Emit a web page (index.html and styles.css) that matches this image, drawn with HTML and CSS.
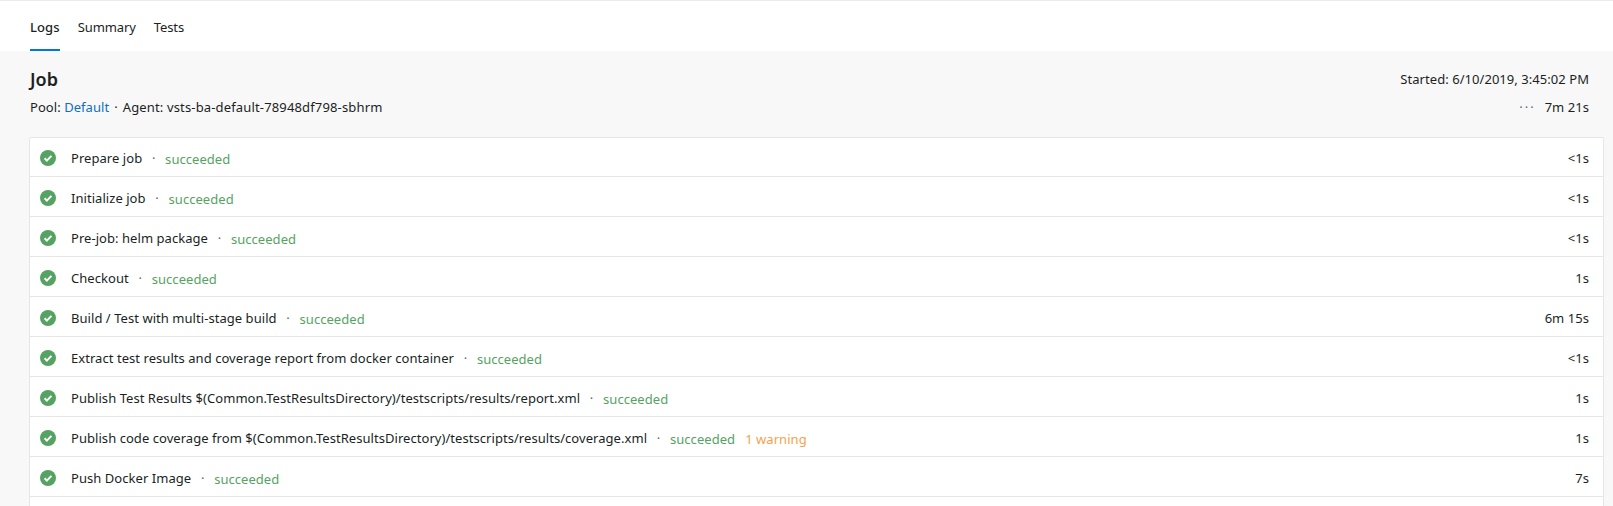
FILE: index.html
```html
<!DOCTYPE html>
<html lang="en">
<head>
<meta charset="utf-8">
<title>Job logs</title>
<link rel="stylesheet" href="styles.css">
</head>
<body>
<nav class="tabs">
  <a class="tab active">Logs</a>
  <a class="tab">Summary</a>
  <a class="tab">Tests</a>
</nav>
<main class="content">
  <header class="job-head">
    <div class="job-top">
      <h1 class="job-title">Job</h1>
      <span class="meta">Started: 6/10/2019, 3:45:02 PM</span>
    </div>
    <div class="job-sub">
      <span class="meta">Pool: <a class="link">Default</a><span class="dot">·</span><span class="agent">Agent: vsts-ba-default-78948df798-sbhrm</span></span>
      <span class="meta duration"><span class="dots">···</span>7m 21s</span>
    </div>
  </header>
  <section class="card">
    <div class="row"><svg class="check" viewBox="0 0 16 16"><circle cx="8" cy="8" r="8"/><path d="M4.6 8.3l2.3 2.3 4.5-4.7"/></svg><span class="name">Prepare job</span><span class="sep">·</span><span class="ok">succeeded</span><span class="time">&lt;1s</span></div>
    <div class="row"><svg class="check" viewBox="0 0 16 16"><circle cx="8" cy="8" r="8"/><path d="M4.6 8.3l2.3 2.3 4.5-4.7"/></svg><span class="name">Initialize job</span><span class="sep">·</span><span class="ok">succeeded</span><span class="time">&lt;1s</span></div>
    <div class="row"><svg class="check" viewBox="0 0 16 16"><circle cx="8" cy="8" r="8"/><path d="M4.6 8.3l2.3 2.3 4.5-4.7"/></svg><span class="name">Pre-job: helm package</span><span class="sep">·</span><span class="ok">succeeded</span><span class="time">&lt;1s</span></div>
    <div class="row"><svg class="check" viewBox="0 0 16 16"><circle cx="8" cy="8" r="8"/><path d="M4.6 8.3l2.3 2.3 4.5-4.7"/></svg><span class="name">Checkout</span><span class="sep">·</span><span class="ok">succeeded</span><span class="time">1s</span></div>
    <div class="row"><svg class="check" viewBox="0 0 16 16"><circle cx="8" cy="8" r="8"/><path d="M4.6 8.3l2.3 2.3 4.5-4.7"/></svg><span class="name">Build / Test with multi-stage build</span><span class="sep">·</span><span class="ok">succeeded</span><span class="time">6m 15s</span></div>
    <div class="row"><svg class="check" viewBox="0 0 16 16"><circle cx="8" cy="8" r="8"/><path d="M4.6 8.3l2.3 2.3 4.5-4.7"/></svg><span class="name">Extract test results and coverage report from docker container</span><span class="sep">·</span><span class="ok">succeeded</span><span class="time">&lt;1s</span></div>
    <div class="row"><svg class="check" viewBox="0 0 16 16"><circle cx="8" cy="8" r="8"/><path d="M4.6 8.3l2.3 2.3 4.5-4.7"/></svg><span class="name">Publish Test Results $(Common.TestResultsDirectory)/testscripts/results/report.xml</span><span class="sep">·</span><span class="ok">succeeded</span><span class="time">1s</span></div>
    <div class="row"><svg class="check" viewBox="0 0 16 16"><circle cx="8" cy="8" r="8"/><path d="M4.6 8.3l2.3 2.3 4.5-4.7"/></svg><span class="name">Publish code coverage from $(Common.TestResultsDirectory)/testscripts/results/coverage.xml</span><span class="sep">·</span><span class="ok">succeeded</span><span class="warn">1 warning</span><span class="time">1s</span></div>
    <div class="row"><svg class="check" viewBox="0 0 16 16"><circle cx="8" cy="8" r="8"/><path d="M4.6 8.3l2.3 2.3 4.5-4.7"/></svg><span class="name">Push Docker Image</span><span class="sep">·</span><span class="ok">succeeded</span><span class="time">7s</span></div>
    <div class="row empty"></div>
  </section>
</main>
</body>
</html>
```
FILE: styles.css
```css
* { box-sizing: border-box; }
html, body { margin: 0; height: 100%; overflow: hidden; }
body {
  background: #f8f8f8;
  color: #201f1e;
  font-family: "Noto Sans", "Open Sans", sans-serif;
  font-size: 13px;
  letter-spacing: 0.05px;
}
.tabs {
  display: flex;
  gap: 18px;
  height: 51px;
  padding: 0 30px;
  background: #fff;
  border-top: 1px solid #eaeaea;
  letter-spacing: -0.1px;
}
.tab {
  height: 50px;
  padding-top: 17px;
  line-height: 18px;
  border-bottom: 2px solid transparent;
}
.tab.active { border-bottom-color: #0078d4; font-weight: 500; letter-spacing: 0.1px; }
.content { padding: 0 9px 0 29px; }
.job-head { height: 86px; padding: 15px 15px 0 1px; }
.job-top, .job-sub { display: flex; justify-content: space-between; align-items: center; }
.job-top { height: 26px; }
.job-sub { height: 18px; margin-top: 6px; }
.job-title { margin: 0; font-size: 18px; font-weight: 600; line-height: 26px; }
.link { color: #106ebe; }
.dot { margin: 0 5px; color: #201f1e; }
.agent { letter-spacing: 0.15px; }
.duration { display: flex; align-items: center; gap: 9px; }
.dots { color: #666; letter-spacing: 2px; }
.card {
  background: #fff;
  border: 1px solid #e6e6e6;
  border-bottom: 0;
  border-radius: 2px 2px 0 0;
}
.row {
  display: flex;
  align-items: center;
  height: 40px;
  padding: 2px 14px 0 10px;
  border-bottom: 1px solid #e6e6e6;
}
.row:first-child { height: 39px; }
.row.empty { height: 9px; border-bottom: 0; }
.check { width: 16px; height: 16px; flex: none; margin-right: 15px; }
.check circle { fill: #55a362; }
.check path { fill: none; stroke: #fff; stroke-width: 2; }
.sep { margin: 0 9.7px; color: #666; }
.ok { color: #55a362; margin-top: 2px; }
.warn { margin-left: 10px; color: #f7a24b; margin-top: 2px; }
.time { margin-left: auto; }
```
